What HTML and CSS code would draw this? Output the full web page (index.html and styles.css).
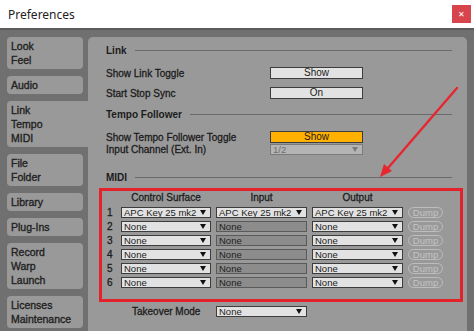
FILE: index.html
```html
<!DOCTYPE html>
<html lang="en">
<head>
  <meta charset="UTF-8" />
  <title>Preferences</title>
  <link rel="stylesheet" href="styles.css">
</head>
<body>
  <div class="window">
    <div class="titlebar">
      <span class="title">Preferences</span>
      <span class="close">&#x2715;</span>
    </div>

    <div class="body">
      <nav class="tabs">
        <div class="tab">Look<br>Feel</div>
        <div class="tab">Audio</div>
        <div class="tab active">Link<br>Tempo<br>MIDI</div>
        <div class="tab">File<br>Folder</div>
        <div class="tab">Library</div>
        <div class="tab">Plug-Ins</div>
        <div class="tab">Record<br>Warp<br>Launch</div>
        <div class="tab">Licenses<br>Maintenance</div>
      </nav>

      <main class="panel">
        <div class="section s-link"><span>Link</span></div>
        <div class="row r1"><span class="label">Show Link Toggle</span><span class="btn">Show</span></div>
        <div class="row r2"><span class="label">Start Stop Sync</span><span class="btn">On</span></div>

        <div class="section s-tempo"><span>Tempo Follower</span></div>
        <div class="row r3"><span class="label">Show Tempo Follower Toggle</span><span class="btn on">Show</span></div>
        <div class="row r4"><span class="label">Input Channel (Ext. In)</span><span class="select off">1/2</span></div>

        <div class="section s-midi"><span>MIDI</span></div>
        <div class="midi-box">
          <div class="midi-grid">
            <span></span>
            <span class="head">Control Surface</span>
            <span class="head">Input</span>
            <span class="head">Output</span>
            <span></span>

            <span class="num">1</span>
            <span class="select">APC Key 25 mk2</span>
            <span class="select">APC Key 25 mk2</span>
            <span class="select">APC Key 25 mk2</span>
            <span class="dump">Dump</span>

            <span class="num">2</span>
            <span class="select">None</span>
            <span class="select dim">None</span>
            <span class="select">None</span>
            <span class="dump">Dump</span>

            <span class="num">3</span>
            <span class="select">None</span>
            <span class="select dim">None</span>
            <span class="select">None</span>
            <span class="dump">Dump</span>

            <span class="num">4</span>
            <span class="select">None</span>
            <span class="select dim">None</span>
            <span class="select">None</span>
            <span class="dump">Dump</span>

            <span class="num">5</span>
            <span class="select">None</span>
            <span class="select dim">None</span>
            <span class="select">None</span>
            <span class="dump">Dump</span>

            <span class="num">6</span>
            <span class="select">None</span>
            <span class="select dim">None</span>
            <span class="select">None</span>
            <span class="dump">Dump</span>
          </div>
        </div>

        <div class="takeover">
          <span class="label">Takeover Mode</span>
          <span class="select">None</span>
        </div>
      </main>
    </div>

    <svg class="arrow" width="474" height="331" viewBox="0 0 474 331">
      <line x1="457" y1="88" x2="388" y2="168" stroke="#e8262f" stroke-width="2.4" stroke-linecap="round"/>
      <polygon points="380,177 392,171 384,164" fill="#e8262f"/>
    </svg>
  </div>
</body>
</html>
```

FILE: styles.css
```css
html, body { margin: 0; padding: 0; }
body { width: 474px; height: 331px; overflow: hidden; font-family: "Liberation Sans", Arial, sans-serif; font-size: 10px; color: #1c1c1c; }

.window { position: relative; width: 474px; height: 331px; background: #707070; }

.titlebar { height: 28px; background: #fff; display: flex; align-items: center; justify-content: space-between; padding-left: 8px; box-sizing: border-box; }
.title { font-family: "Noto Sans", "Open Sans", sans-serif; font-size: 12px; color: #222; }
.close { width: 19px; height: 18px; margin-right: 3px; background: #d8444c; color: #fff; font-size: 8px; display: flex; align-items: center; justify-content: center; }

.body { display: flex; height: 303px; padding: 7px 7px 0 7px; box-sizing: border-box; border-top: 2px solid #5c5c5c; }

.tabs { width: 76px; margin-right: 5px; display: flex; flex-direction: column; gap: 7px; }
.tab { background: #999; border-radius: 4px; padding: 2px 4px; line-height: 14px; color: #222; font-size: 10.5px; -webkit-text-stroke: 0.35px #222; }
.tab.active { margin-right: -5px; border-radius: 4px 0 0 4px; }

.panel { flex: 1; background: #999; border-radius: 5px 5px 0 0; padding: 6px 15px 0 18px; }

.label, .head, .num { -webkit-text-stroke: 0.3px #1c1c1c; }

.section { display: flex; align-items: center; height: 14px; font-weight: bold; }
.section::after { content: ''; flex: 1; height: 1px; background: #6a6a6a; margin-left: 8px; }
.s-tempo { margin-top: 8px; }
.s-midi { margin-top: 15px; }

.row { display: flex; align-items: center; height: 12px; }
.row .label { width: 164px; }
.r1 { margin-top: 10px; }
.r2 { margin-top: 8px; }
.r3 { margin-top: 10px; }
.r4 { margin-top: 1px; height: 11px; }

.btn { width: 93px; height: 12px; box-sizing: border-box; background: #e2e2e2; border: 1px solid #3c3c3c; text-align: center; line-height: 10px; font-size: 10px; }
.btn.on { background: #ffb000; }

.select { position: relative; height: 11px; box-sizing: border-box; background: #e2e2e2; border: 1px solid #3c3c3c; padding: 0 11px 0 2px; line-height: 9px; font-size: 9.5px; white-space: nowrap; overflow: hidden; }
.select::after { content: ''; position: absolute; right: 4px; top: 2px; border-left: 3px solid transparent; border-right: 3px solid transparent; border-top: 5px solid #111; }
.select.dim { background: #8c8c8c; border-color: #5a5a5a; color: #1e1e1e; }
.select.dim::after { display: none; }
.select.off { width: 93px; background: #b4b4b4; border-color: #7a7a7a; color: #6e6e6e; }
.select.off::after { border-top-color: #7a7a7a; }

.midi-box { margin: 4px -11px 0 -7px; border: 3px solid #e3222c; padding: 1px 0 11px 5px; }
.midi-grid { display: grid; grid-template-columns: 9px 90px 91px 91px 35px; grid-template-rows: 12px repeat(6, 11px); column-gap: 5px; row-gap: 3px; }
.midi-grid .head { text-align: center; font-size: 10px; line-height: 12px; margin-bottom: 2px; }
.num { line-height: 11px; font-size: 10px; }
.dump { height: 11px; box-sizing: border-box; border: 1px solid #bdbdbd; border-radius: 6px; color: #c4c4c4; text-align: center; line-height: 9px; font-size: 9.5px; }

.takeover { display: flex; align-items: center; margin-top: 4px; padding-left: 26px; }
.takeover .label { width: 84px; }
.takeover .select { width: 91px; }

.arrow { position: absolute; left: 0; top: 0; pointer-events: none; }
```
